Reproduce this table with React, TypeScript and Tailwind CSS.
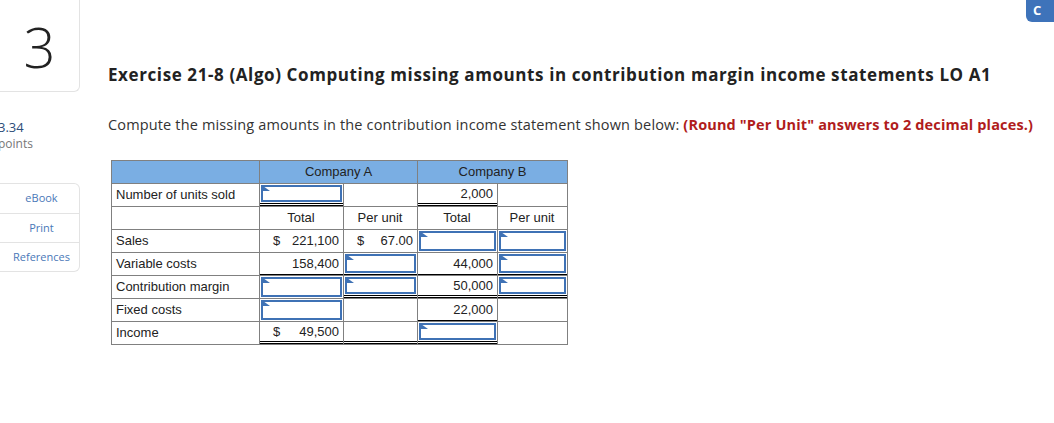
import React from 'react';

type Cell = {
  text?: string;
  dollar?: boolean;
  input?: boolean;
  align?: 'left' | 'right' | 'center';
  under?: 'single' | 'double';
};

type Row = { label: string; cells: Cell[] };

const rows: Row[] = [
  {
    label: 'Number of units sold',
    cells: [
      { input: true, under: 'double' },
      {},
      { text: '2,000', under: 'double' },
      {},
    ],
  },
  {
    label: '',
    cells: [
      { text: 'Total', align: 'center' },
      { text: 'Per unit', align: 'center' },
      { text: 'Total', align: 'center' },
      { text: 'Per unit', align: 'center' },
    ],
  },
  {
    label: 'Sales',
    cells: [
      { text: '221,100', dollar: true },
      { text: '67.00', dollar: true },
      { input: true },
      { input: true },
    ],
  },
  {
    label: 'Variable costs',
    cells: [
      { text: '158,400', under: 'single' },
      { input: true, under: 'single' },
      { text: '44,000', under: 'single' },
      { input: true, under: 'single' },
    ],
  },
  {
    label: 'Contribution margin',
    cells: [
      { input: true },
      { input: true, under: 'double' },
      { text: '50,000', under: 'double' },
      { input: true, under: 'double' },
    ],
  },
  {
    label: 'Fixed costs',
    cells: [{ input: true }, {}, { text: '22,000', under: 'single' }, {}],
  },
  {
    label: 'Income',
    cells: [
      { text: '49,500', dollar: true, under: 'double' },
      { under: 'double' },
      { input: true, under: 'double' },
      {},
    ],
  },
];

function InputBox() {
  return (
    <div className="relative h-full w-full border-2 border-[#3f72b5] bg-white">
      <div className="absolute left-0 top-0 h-0 w-0 -translate-y-[1px] border-l-[7px] border-t-[5px] border-l-[#3f72b5] border-t-transparent" />
    </div>
  );
}

function ValueCell({ cell }: { cell: Cell }) {
  const under =
    cell.under === 'double'
      ? 'border-b-[3px] border-double border-b-black'
      : cell.under === 'single'
        ? 'border-b border-b-black'
        : '';

  return (
    <td className="h-[23px] border border-[#808080] p-0 align-middle">
      <div className={`flex h-[22px] items-center ${under}`}>
        {cell.input ? (
          <div className="h-full w-full p-[1px]">
            <InputBox />
          </div>
        ) : cell.text ? (
          <div
            className={`flex w-full items-center pl-[3px] pr-[4px] ${
              cell.align === 'center' ? 'justify-center' : 'justify-between'
            }`}
          >
            {cell.align === 'center' ? (
              <span>{cell.text}</span>
            ) : (
              <>
                <span className="pl-[10px]">{cell.dollar ? '$' : ''}</span>
                <span>{cell.text}</span>
              </>
            )}
          </div>
        ) : null}
      </div>
    </td>
  );
}

export default function App() {
  return (
    <div className="relative flex h-[423px] w-[1054px] overflow-hidden bg-white font-['Open_Sans',sans-serif] text-[#222]">
      <div className="absolute right-0 top-0 flex h-[22px] w-[28px] items-center rounded-bl-md bg-[#3e73ba] pl-[7px] text-[13px] font-bold text-white">
        C
      </div>

      <aside className="flex w-[80px] shrink-0 flex-col">
        <div className="flex h-[92px] items-center justify-center rounded-br-md border-b border-r border-[#e3e3e3]">
          <span className="text-[56px] font-light leading-none text-[#222]">3</span>
        </div>
        <div className="-ml-[2px] mt-[27px] text-[13px] leading-[16px] text-[#2d4d7a]">3.34</div>
        <div className="-ml-[2px] mt-[1px] text-[12px] leading-[15px] text-[#777]">points</div>
        <div className="mt-[32px] flex flex-col rounded-r-md border border-l-0 border-[#e3e3e3] text-[11px] text-[#4a78b8]">
          <div className="flex h-[30px] items-center justify-center border-b border-[#e3e3e3] pl-[4px]">eBook</div>
          <div className="flex h-[29px] items-center justify-center border-b border-[#e3e3e3] pl-[4px]">Print</div>
          <div className="flex h-[28px] items-center justify-center pl-[4px]">References</div>
        </div>
      </aside>

      <main className="ml-[28px] flex flex-col">
        <h1 className="mt-[64px] whitespace-nowrap text-[17px] font-bold leading-[22px] tracking-[0.6px] text-[#222]">
          Exercise 21-8 (Algo) Computing missing amounts in contribution margin income statements LO A1
        </h1>
        <p className="mt-[29px] whitespace-nowrap text-[14.5px] leading-[20px] tracking-[0.15px] text-[#333]">
          Compute the missing amounts in the contribution income statement shown below:{' '}
          <span className="font-bold text-[#b01c1c]">(Round "Per Unit" answers to 2 decimal places.)</span>
        </p>

        <table className="ml-[3px] mt-[25px] w-[456px] table-fixed border-collapse font-['Liberation_Sans',Arial,sans-serif] text-[13px] text-[#222]">
          <colgroup>
            <col className="w-[148px]" />
            <col className="w-[84px]" />
            <col className="w-[74px]" />
            <col className="w-[80px]" />
            <col className="w-[70px]" />
          </colgroup>
          <thead>
            <tr className="bg-[#7aaee3]">
              <th className="h-[23px] border border-[#808080] p-0" />
              <th colSpan={2} className="h-[23px] border border-[#808080] p-0 text-center font-normal">
                Company A
              </th>
              <th colSpan={2} className="h-[23px] border border-[#808080] p-0 text-center font-normal">
                Company B
              </th>
            </tr>
          </thead>
          <tbody>
            {rows.map((row, i) => (
              <tr key={i}>
                <td className="h-[23px] border border-[#808080] px-[4px] py-0">{row.label}</td>
                {row.cells.map((cell, j) => (
                  <ValueCell key={j} cell={cell} />
                ))}
              </tr>
            ))}
          </tbody>
        </table>
      </main>
    </div>
  );
}
